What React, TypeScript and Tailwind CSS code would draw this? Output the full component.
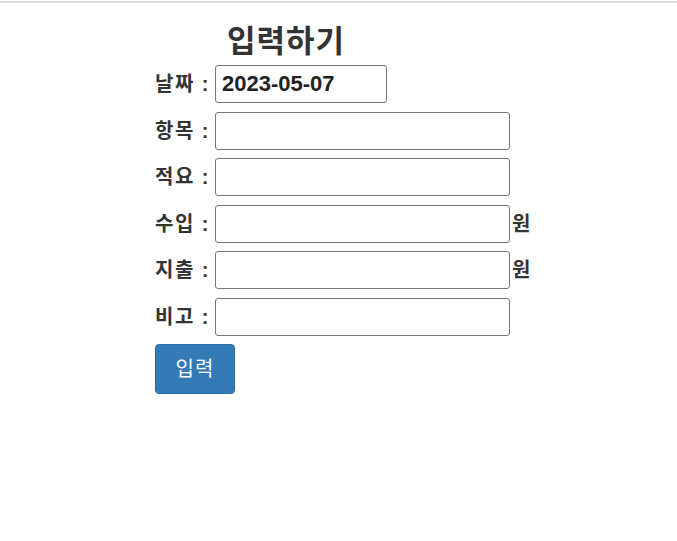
export default function App() {
  const rows = [
    { label: "항목", unit: false },
    { label: "적요", unit: false },
    { label: "수입", unit: true },
    { label: "지출", unit: true },
    { label: "비고", unit: false },
  ]

  return (
    <div
      className="min-h-[541px] bg-white text-[#333333]"
      style={{ fontFamily: '"Liberation Sans", "Noto Sans CJK KR", sans-serif' }}
    >
      <div className="h-[3px] border-t-2 border-[#dddddd] mt-px" />
      <div className="pl-[155px] pt-[20px]">
        <h1 className="w-[262px] text-center text-[31px] font-bold leading-[36px] tracking-[1px]">입력하기</h1>
        <div className="mt-[5px] flex flex-col gap-[8.6px]">
          <div className="flex items-center h-[38px]">
            <span className="w-[60px] text-[20px] font-bold tracking-[1.5px]">날짜 :</span>
            <input
              readOnly
              value="2023-05-07"
              className="w-[172px] h-[38px] px-[6px] border border-[#767676] rounded-[3px] text-[22px] font-bold text-[#222222] outline-none"
            />
          </div>
          {rows.map((r) => (
            <div key={r.label} className="flex items-center h-[38px]">
              <span className="w-[60px] text-[20px] font-bold tracking-[1.5px]">{r.label} :</span>
              <input className="w-[295px] h-[38px] px-[6px] border border-[#767676] rounded-[3px] text-[20px] outline-none" />
              {r.unit && <span className="ml-[2px] text-[20px] font-bold">원</span>}
            </div>
          ))}
          <button className="mt-[-1px] w-[80px] h-[50px] rounded-[4px] bg-[#337ab7] border border-[#2e6da4] text-white text-[20px] tracking-[1px]">
            입력
          </button>
        </div>
      </div>
    </div>
  )
}
